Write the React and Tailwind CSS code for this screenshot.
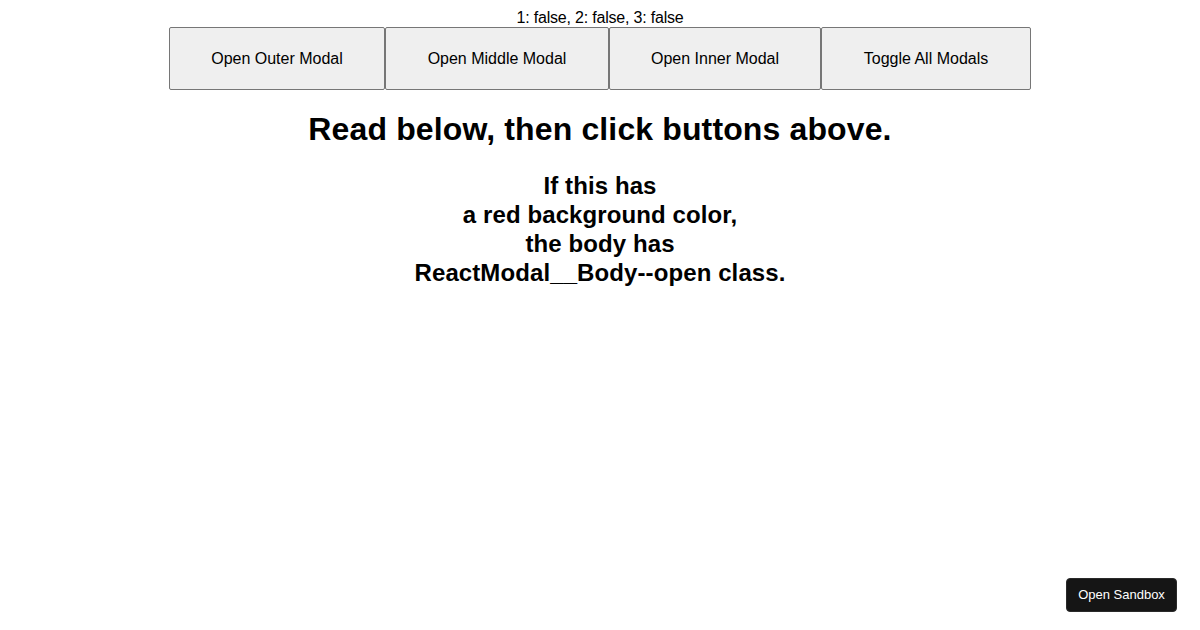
import { useState } from 'react';

export default function App() {
  const [open, setOpen] = useState({ 1: false, 2: false, 3: false });

  const buttons = [
    { label: 'Open Outer Modal', w: 'w-[216px]' },
    { label: 'Open Middle Modal', w: 'w-[224px]' },
    { label: 'Open Inner Modal', w: 'w-[212px]' },
    { label: 'Toggle All Modals', w: 'w-[210px]' },
  ];

  return (
    <div className="min-h-[630px] bg-white text-black font-['Liberation_Sans',Arial,sans-serif] pt-[9px] text-center relative">
      <div className="text-base leading-[18px] tracking-[-0.2px]">
        1: {String(open[1])}, 2: {String(open[2])}, 3: {String(open[3])}
      </div>
      <div className="flex justify-center">
        {buttons.map((b) => (
          <button
            key={b.label}
            className={`${b.w} h-[63px] bg-[#efefef] border border-[#767676] rounded-[2px] text-base text-black`}
          >
            {b.label}
          </button>
        ))}
      </div>
      <h1 className="text-[32px] font-bold leading-[37px] mt-[21px] tracking-[0.13px]">
        Read below, then click buttons above.
      </h1>
      <h2 className="text-2xl font-bold leading-[29px] mt-[23px] tracking-[0.1px]">
        If this has
        <br />a red background color,
        <br />the body has
        <br />ReactModal__Body--open class.
      </h2>
      <button className="absolute right-[23px] bottom-[18px] w-[111px] h-[34px] bg-[#151515] text-white text-[13px] rounded-[4px] font-['Liberation_Sans',Arial,sans-serif] border border-[#2a2a2a]">
        Open Sandbox
      </button>
    </div>
  );
}
